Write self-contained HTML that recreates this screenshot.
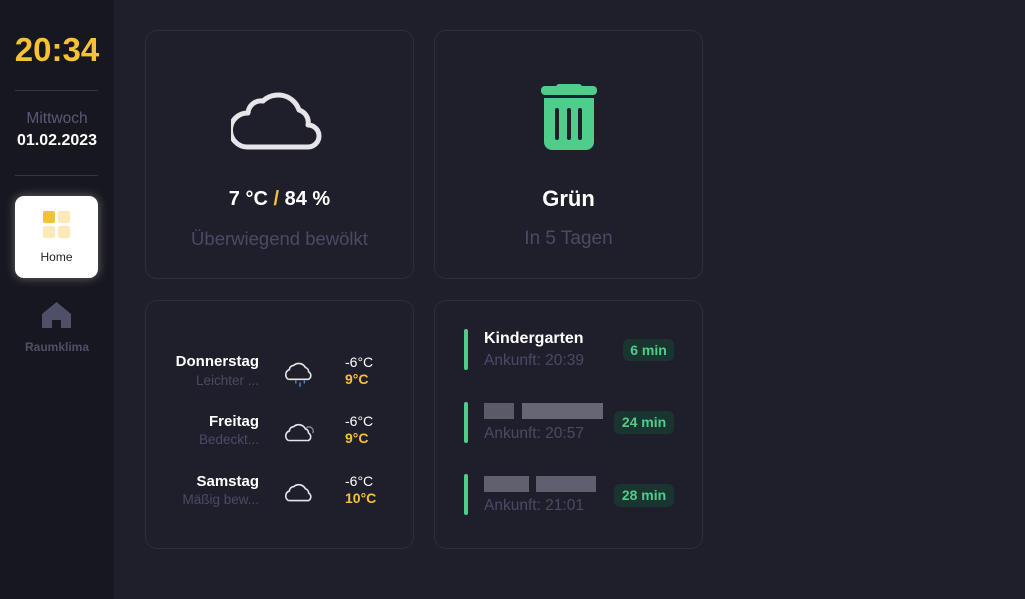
<!DOCTYPE html>
<html><head><meta charset="utf-8"><style>
*{margin:0;padding:0;box-sizing:border-box}
body{width:1025px;height:599px;background:#1f1f2b;font-family:"Liberation Sans",sans-serif;position:relative;overflow:hidden}
.side{position:absolute;left:0;top:0;width:114px;height:599px;background:#17171f}
.abs{position:absolute}
.card{position:absolute;border:1px solid #2c2c3b;border-radius:12px;background:#1f1f2b}
.c{text-align:center}
</style></head><body>
<div class="side">
  <div class="abs c" style="left:0;width:114px;top:31px;font-size:33px;font-weight:bold;color:#f6c234">20:34</div>
  <div class="abs" style="left:15px;width:83px;top:90px;height:1px;background:#33334a"></div>
  <div class="abs c" style="left:0;width:114px;top:110px;font-size:15.5px;color:#5a5a78">Mittwoch</div>
  <div class="abs c" style="left:0;width:114px;top:132px;font-size:16px;font-weight:bold;color:#fff">01.02.2023</div>
  <div class="abs" style="left:15px;width:83px;top:175px;height:1px;background:#33334a"></div>
  <div class="abs" style="left:15px;top:196px;width:83px;height:82px;background:#fff;border-radius:9px;box-shadow:0 0 10px rgba(255,255,255,.35)">
    <div class="abs" style="left:28px;top:15px;width:12px;height:12px;background:#f6c234;border-radius:2px"></div>
    <div class="abs" style="left:43px;top:15px;width:12px;height:12px;background:#fde9b8;border-radius:2px"></div>
    <div class="abs" style="left:28px;top:30px;width:12px;height:12px;background:#fde9b8;border-radius:2px"></div>
    <div class="abs" style="left:43px;top:30px;width:12px;height:12px;background:#fde9b8;border-radius:2px"></div>
    <div class="abs c" style="left:0;width:83px;top:54px;font-size:12px;color:#222">Home</div>
  </div>
  <svg class="abs" style="left:42px;top:302px" width="29" height="26" viewBox="0 0 29 26"><path d="M14.5 0 L29 12 V26 H19 V18 H10 V26 H0 V12 Z" fill="#4f4f68"/></svg>
  <div class="abs c" style="left:0;width:114px;top:340px;font-size:12px;font-weight:bold;color:#4f4f68">Raumklima</div>
</div>

<div class="card" style="left:145px;top:30px;width:269px;height:249px">
  <svg class="abs" style="left:85px;top:58px" width="92" height="62" viewBox="0 0 92 62"><path d="M16 58 H77 A11 11 0 0 0 77 36 A13 13 0 0 0 68 21 A22 22 0 0 0 32 12 A13 13 0 0 0 17 24 A17 17 0 0 0 16 58 Z" fill="none" stroke="#e6e6ea" stroke-width="5" stroke-linejoin="round"/></svg>
  <div class="abs c" style="left:0;width:267px;top:157px;font-size:20px;font-weight:bold;color:#fff">7 °C <span style="color:#f6c234">/</span> 84 %</div>
  <div class="abs c" style="left:0;width:267px;top:197px;font-size:18.5px;color:#4a4a66">Überwiegend bewölkt</div>
</div>

<div class="card" style="left:434px;top:30px;width:269px;height:249px">
  <svg class="abs" style="left:105px;top:53px" width="58" height="67" viewBox="0 0 58 67"><rect x="1" y="2" width="56" height="9" rx="4" fill="#4fcd8a"/><rect x="16" y="0" width="26" height="6" rx="3" fill="#4fcd8a"/><path d="M4 14 H54 V58 A8 8 0 0 1 46 66 H12 A8 8 0 0 1 4 58 Z" fill="#4fcd8a"/><rect x="15" y="24" width="4" height="32" rx="2" fill="#1f1f2b"/><rect x="27" y="24" width="4" height="32" rx="2" fill="#1f1f2b"/><rect x="38" y="24" width="4" height="32" rx="2" fill="#1f1f2b"/></svg>
  <div class="abs c" style="left:0;width:267px;top:155px;font-size:22px;font-weight:bold;color:#fff">Grün</div>
  <div class="abs c" style="left:0;width:267px;top:197px;font-size:19px;color:#4a4a66">In 5 Tagen</div>
</div>

<div class="card" style="left:145px;top:300px;width:269px;height:249px">
  <div class="abs" style="right:154px;top:52px;font-size:15px;font-weight:bold;color:#fff;text-align:right">Donnerstag</div>
  <div class="abs" style="right:154px;top:72px;font-size:13.5px;color:#4a4a66;text-align:right">Leichter ...</div>
  <div class="abs" style="right:154px;top:112px;font-size:15px;font-weight:bold;color:#fff;text-align:right">Freitag</div>
  <div class="abs" style="right:154px;top:131px;font-size:13.5px;color:#4a4a66;text-align:right">Bedeckt...</div>
  <div class="abs" style="right:154px;top:172px;font-size:15px;font-weight:bold;color:#fff;text-align:right">Samstag</div>
  <div class="abs" style="right:154px;top:191px;font-size:13.5px;color:#4a4a66;text-align:right">Mäßig bew...</div>
  <svg class="abs" style="left:137px;top:60px" width="32" height="28" viewBox="0 0 30 26"><path d="M5 17 H24 A4 4 0 0 0 24 10 A4 4 0 0 0 21 6 A7 7 0 0 0 10 4 A4 4 0 0 0 6 8 A5 5 0 0 0 5 17" fill="none" stroke="#e6e6ea" stroke-width="1.5"/><path d="M12 18v3M16 20v4M20 18v3" stroke="#4a8ccc" stroke-width="1.3"/></svg>
  <svg class="abs" style="left:137px;top:118px" width="34" height="26" viewBox="0 0 32 24"><path d="M22 8 A4 4 0 0 1 28 13" fill="none" stroke="#888" stroke-width="1.3"/><path d="M5 20 H24 A4 4 0 0 0 24 13 A4 4 0 0 0 21 9 A7 7 0 0 0 10 7 A4 4 0 0 0 6 11 A5 5 0 0 0 5 20" fill="none" stroke="#e6e6ea" stroke-width="1.5"/></svg>
  <svg class="abs" style="left:137px;top:178px" width="32" height="26" viewBox="0 0 30 24"><path d="M5 20 H24 A4 4 0 0 0 24 13 A4 4 0 0 0 21 9 A7 7 0 0 0 10 7 A4 4 0 0 0 6 11 A5 5 0 0 0 5 20" fill="none" stroke="#e6e6ea" stroke-width="1.5"/></svg>
  <div class="abs" style="left:199px;top:53px;font-size:14px;color:#fff">-6°C</div>
  <div class="abs" style="left:199px;top:70px;font-size:14px;font-weight:bold;color:#f6c234">9°C</div>
  <div class="abs" style="left:199px;top:112px;font-size:14px;color:#fff">-6°C</div>
  <div class="abs" style="left:199px;top:129px;font-size:14px;font-weight:bold;color:#f6c234">9°C</div>
  <div class="abs" style="left:199px;top:172px;font-size:14px;color:#fff">-6°C</div>
  <div class="abs" style="left:199px;top:189px;font-size:14px;font-weight:bold;color:#f6c234">10°C</div>
</div>

<div class="card" style="left:434px;top:300px;width:269px;height:249px">
  <div class="abs" style="left:29px;top:28px;width:4px;height:41px;background:#4fcd8a;border-radius:2px"></div>
  <div class="abs" style="left:49px;top:29px;font-size:16px;font-weight:bold;color:#fff">Kindergarten</div>
  <div class="abs" style="left:49px;top:51px;font-size:15.5px;color:#4a4a66">Ankunft: 20:39</div>
  <div class="abs" style="left:188px;top:38px;width:51px;height:22px;background:#1a3430;border-radius:6px;color:#4fcd8a;font-size:14px;font-weight:bold;text-align:center;line-height:22px">6 min</div>

  <div class="abs" style="left:29px;top:101px;width:4px;height:41px;background:#4fcd8a;border-radius:2px"></div>
  <div class="abs" style="left:49px;top:102px;width:119px;height:16px;background:linear-gradient(90deg,#6a6a78 0 30px,transparent 30px 38px,#777786 38px);opacity:.8"></div>
  <div class="abs" style="left:49px;top:124px;font-size:15.5px;color:#4a4a66">Ankunft: 20:57</div>
  <div class="abs" style="left:179px;top:110px;width:60px;height:23px;background:#1a3430;border-radius:6px;color:#4fcd8a;font-size:14px;font-weight:bold;text-align:center;line-height:23px">24 min</div>

  <div class="abs" style="left:29px;top:173px;width:4px;height:41px;background:#4fcd8a;border-radius:2px"></div>
  <div class="abs" style="left:49px;top:175px;width:112px;height:16px;background:linear-gradient(90deg,#707080 0 45px,transparent 45px 52px,#6f7080 52px);opacity:.8"></div>
  <div class="abs" style="left:49px;top:196px;font-size:15.5px;color:#4a4a66">Ankunft: 21:01</div>
  <div class="abs" style="left:179px;top:183px;width:60px;height:23px;background:#1a3430;border-radius:6px;color:#4fcd8a;font-size:14px;font-weight:bold;text-align:center;line-height:23px">28 min</div>
</div>
</body></html>
